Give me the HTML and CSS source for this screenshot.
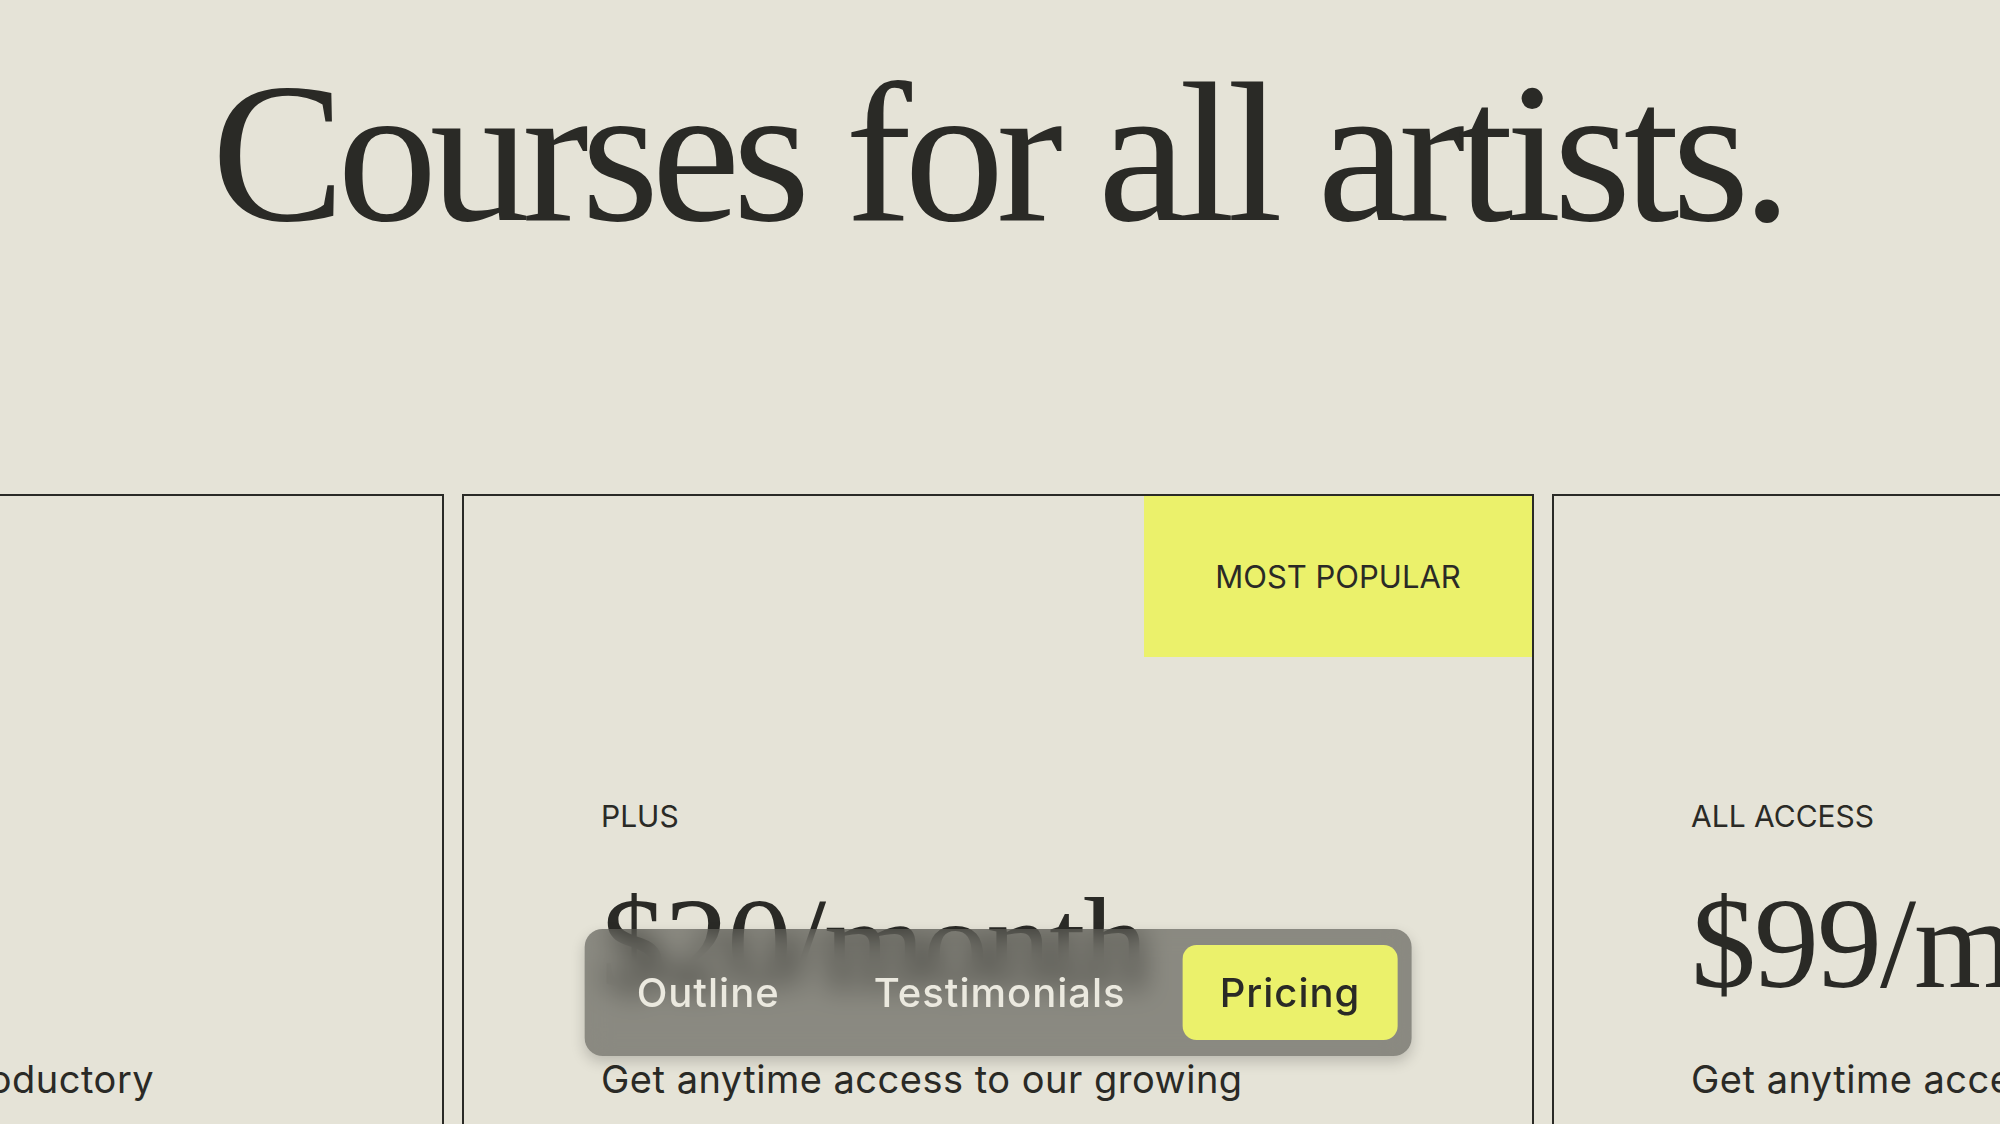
FILE: index.html
```html
<!DOCTYPE html>
<html lang="en">
<head>
<meta charset="utf-8">
<title>Courses for all artists.</title>
<link rel="stylesheet" href="styles.css">
</head>
<body>
<main class="page">
  <h1 class="headline">Courses for all artists.</h1>
  <section class="plans">
    <article class="plan">
      <div class="plan-body">
        <p class="plan-name">BASIC</p>
        <p class="plan-price">Free</p>
        <p class="plan-desc">Get started with these introductory lessons and sketchbook prompts.</p>
      </div>
    </article>
    <article class="plan plan--featured">
      <div class="badge">MOST POPULAR</div>
      <div class="plan-body">
        <p class="plan-name">PLUS</p>
        <p class="plan-price">$20/month</p>
        <p class="plan-desc">Get anytime access to our growing library of courses.</p>
      </div>
    </article>
    <article class="plan">
      <div class="plan-body">
        <p class="plan-name">ALL ACCESS</p>
        <p class="plan-price">$99/month</p>
        <p class="plan-desc">Get anytime access to every course, plus live critiques.</p>
      </div>
    </article>
  </section>
</main>
<nav class="tabs">
  <a class="tab" href="#outline">Outline</a>
  <a class="tab" href="#testimonials">Testimonials</a>
  <a class="tab tab--active" href="#pricing">Pricing</a>
</nav>
</body>
</html>
```
FILE: styles.css
```css
html, body {
  margin: 0;
  padding: 0;
}
body {
  background: #e5e3d7;
  color: #2a2a26;
  font-family: Inter, "Liberation Sans", sans-serif;
  overflow-x: hidden;
  min-height: 1124px;
}
.page {
  display: flex;
  flex-direction: column;
  align-items: center;
}
.headline {
  margin: 53px 4px 0 0;
  font-family: "Liberation Serif", serif;
  font-weight: 400;
  font-size: 200px;
  line-height: 1;
  letter-spacing: -7.6px;
  text-align: center;
  white-space: nowrap;
}
.plans {
  box-sizing: border-box;
  margin-top: 241px;
  width: 100%;
  padding-right: 4px;
  display: flex;
  justify-content: center;
  gap: 18px;
}
.plan {
  position: relative;
  flex: 0 0 1072px;
  box-sizing: border-box;
  min-height: 900px;
  border: 2px solid #2a2a26;
}
.plan-body {
  padding: 302px 137px 0;
}
.plan-name {
  margin: 0;
  font-size: 30px;
  line-height: 36px;
}
.plan-price {
  margin: 44px 0 0;
  font-family: "Liberation Serif", serif;
  font-size: 130px;
  line-height: 1;
  letter-spacing: -2px;
  white-space: nowrap;
}
.plan-desc {
  margin: 41px 0 0;
  max-width: 660px;
  font-size: 38px;
  letter-spacing: 0.5px;
  line-height: 1.6;
}
.badge {
  position: absolute;
  top: 0;
  right: 0;
  width: 388px;
  height: 161px;
  display: flex;
  align-items: center;
  justify-content: center;
  background: #ebf16b;
  font-size: 31px;
}
.tabs {
  position: fixed;
  left: calc(50% - 2px);
  bottom: 68px;
  transform: translateX(-50%);
  display: flex;
  gap: 20px;
  padding: 16px 14px 16px 15px;
  border-radius: 18px;
  background: rgba(64, 64, 58, 0.55);
  -webkit-backdrop-filter: blur(14px);
  backdrop-filter: blur(14px);
  box-shadow: 0 6px 14px rgba(0, 0, 0, 0.18);
}
.tab {
  display: flex;
  align-items: center;
  height: 95px;
  padding: 0 37px;
  border-radius: 14px;
  font-size: 40px;
  font-weight: 500;
  letter-spacing: 1px;
  color: #ebe9df;
  text-decoration: none;
}
.tab--active {
  background: #ebf16b;
  color: #2a2a26;
}
```
